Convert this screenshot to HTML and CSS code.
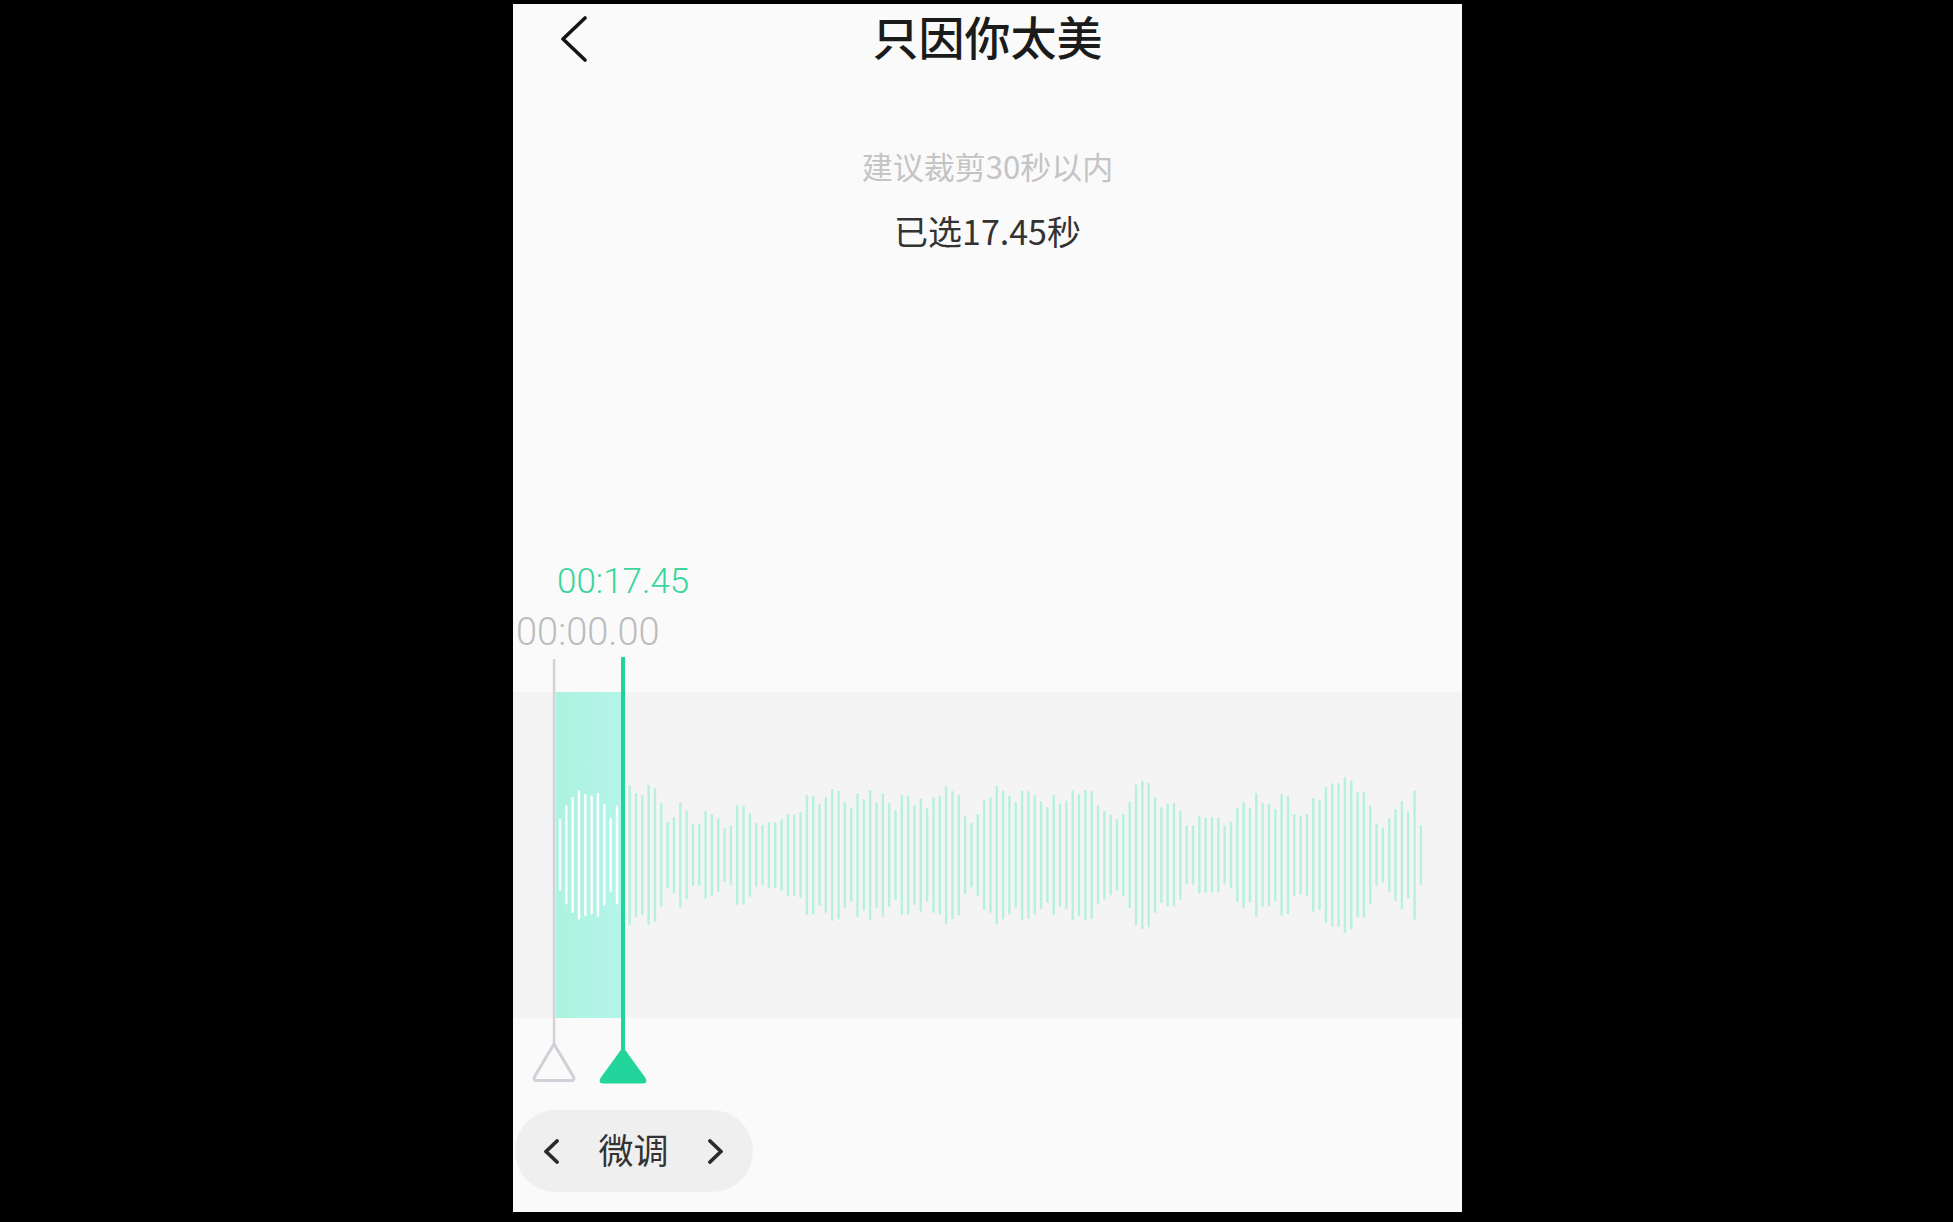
FILE: index.html
```html
<!DOCTYPE html>
<html lang="zh-CN">
<head>
<meta charset="utf-8">
<title>只因你太美</title>
<link rel="stylesheet" href="styles.css">
</head>
<body>
<div class="screen">
  <header class="nav">
    <button class="back" aria-label="返回">
      <svg width="26" height="46" viewBox="0 0 26 46"><polyline points="24,2 2,23 24,44" fill="none" stroke="#151515" stroke-width="3.6" stroke-linecap="round" stroke-linejoin="round"/></svg>
    </button>
    <h1 class="title">只因你太美</h1>
    <span></span>
  </header>
  <div class="hint">建议裁剪30秒以内</div>
  <div class="selected">已选17.45秒</div>

  <section class="editor">
    <div class="time time-current">00:17.45</div>
    <div class="time time-start">00:00.00</div>
    <div class="track">
      <svg id="wave" width="949" height="326" viewBox="0 0 949 326">
        <defs>
          <linearGradient id="sel" x1="0" x2="1" y1="0" y2="0">
            <stop offset="0" stop-color="#adf2de"/>
            <stop offset="1" stop-color="#b3f5eb"/>
          </linearGradient>
        </defs>
        <rect x="43" y="0" width="66" height="326" fill="url(#sel)"/>
        <g id="bars"></g>
      </svg>
    </div>
    <div class="handle-room"></div>

    <svg class="handle handle-start" width="48" height="426" viewBox="0 0 48 426">
      <rect x="22.8" y="0" width="2.6" height="386" fill="#d2d3d9"/>
      <path d="M24 385 L43.2 417.2 Q45.6 421.5 40.8 421.5 L7.2 421.5 Q2.4 421.5 4.8 417.2 Z" fill="#fafafa" stroke="#d0d1d8" stroke-width="3" stroke-linejoin="round"/>
    </svg>
    <svg class="handle handle-end" width="52" height="428" viewBox="0 0 52 428">
      <rect x="24" y="0" width="4" height="394" fill="#22d39a"/>
      <path d="M26 390 L48.5 421 Q51.5 426.5 45.5 426.5 L6.5 426.5 Q0.5 426.5 3.5 421 Z" fill="#23d49b"/>
    </svg>
  </section>

  <div class="fine-tune">
    <svg class="chev" width="17" height="25" viewBox="0 0 17 25"><polyline points="14,2 3,12.5 14,23" fill="none" stroke="#2b2b2b" stroke-width="3.8" stroke-linecap="round" stroke-linejoin="round"/></svg>
    <span class="fine-label">微调</span>
    <svg class="chev" width="17" height="25" viewBox="0 0 17 25"><polyline points="3,2 14,12.5 3,23" fill="none" stroke="#2b2b2b" stroke-width="3.8" stroke-linecap="round" stroke-linejoin="round"/></svg>
  </div>
</div>
<script src="script.js"></script>
</body>
</html>
```

FILE: styles.css
```css
html, body {
  margin: 0;
  padding: 0;
  background: #000;
}
body {
  width: 1953px;
  height: 1222px;
  overflow: hidden;
}
.screen {
  margin: 4px 0 0 513px;
  width: 949px;
  height: 1208px;
  background: #fafafa;
  display: flex;
  flex-direction: column;
  font-family: "Noto Sans CJK SC", "Noto Sans", sans-serif;
}
.nav {
  height: 70px;
  display: grid;
  grid-template-columns: 1fr auto 1fr;
  align-items: center;
}
.back {
  justify-self: start;
  margin-left: 48px;
  width: 26px;
  height: 46px;
  padding: 0;
  border: 0;
  background: none;
}
.back svg { display: block; }
.title {
  margin: 0;
  padding-bottom: 9px;
  font-size: 46px;
  line-height: 56px;
  font-weight: 500;
  color: #1b1b1b;
  white-space: nowrap;
}
.hint {
  margin-top: 76px;
  text-align: center;
  font-size: 31px;
  line-height: 31px;
  color: #c4c4c4;
}
.selected {
  margin-top: 33px;
  text-align: center;
  font-size: 34px;
  line-height: 34px;
  color: #333;
}
.editor {
  position: relative;
  margin-top: 316px;
}
.time {
  font-family: Roboto, "Liberation Sans", sans-serif;
  font-weight: 300;
  white-space: nowrap;
}
.time-current {
  margin-left: 44px;
  font-size: 35px;
  line-height: 35px;
  color: #3ad59d;
}
.time-start {
  margin-top: 14px;
  margin-left: 3px;
  font-size: 38px;
  line-height: 38px;
  color: #bcbcbc;
}
.track {
  margin-top: 41px;
  height: 326px;
  background: #f4f4f4;
}
.track svg { display: block; }
.handle-room { height: 67px; }
.handle {
  position: absolute;
  display: block;
}
.handle-start { left: 17px; top: 95px; }
.handle-end { left: 84px; top: 93px; }
.fine-tune {
  margin: 25px 0 0 2px;
  width: 238px;
  height: 82px;
  box-sizing: border-box;
  padding: 0 29px 0 28px;
  border-radius: 41px;
  background: #efefef;
  display: flex;
  align-items: center;
  justify-content: space-between;
}
.chev { display: block; }
.fine-label {
  padding-bottom: 5px;
  font-size: 35px;
  line-height: 1;
  color: #333;
}
```

FILE: script.js
```js
(function () {
  var H = [36,49.5,58,64.5,61,59.5,62,51,37,49.5,60,70,62,60,70,67,52,33,38,53,44.5,31,31,44,41,37,27,30,50,49.5,42,32.5,30,33,33,36,41,41,43,60,59.5,51,58,66,64.5,53,47,62,56,65,53,62,52,45,60,59.5,50,56.7,46.7,58,59.5,69,64,60.5,39,32.5,41,55,58,69.5,64.5,59.5,53,64.7,64,60,54,48,60,51.7,54.5,65,61,65,64,49.5,44.5,40.5,36,41,53.5,70.5,74.5,72.5,58,48,51.5,52,44.7,29.7,29.7,38.7,37.8,37.8,37.5,29.5,33.5,47.3,53.3,47.5,62,52,51.3,46,61.3,59.5,41,39.5,41,57,55,68,71.7,72,77.8,74.7,62.8,62.8,49.5,31,27.8,37,46,54,43.5,64.7,30];
  var g = document.getElementById('bars');
  var ns = 'http://www.w3.org/2000/svg';
  for (var i = 0; i < H.length; i++) {
    var cx = 47 + i * 6.33;
    var r = document.createElementNS(ns, 'rect');
    r.setAttribute('x', (cx - 1.2).toFixed(2));
    r.setAttribute('y', (163 - H[i]).toFixed(2));
    r.setAttribute('width', '2.4');
    r.setAttribute('height', (H[i] * 2).toFixed(2));
    r.setAttribute('rx', '1.2');
    r.setAttribute('fill', i <= 9 ? '#ffffff' : '#b6f1dd');
    g.appendChild(r);
  }
})();
```
